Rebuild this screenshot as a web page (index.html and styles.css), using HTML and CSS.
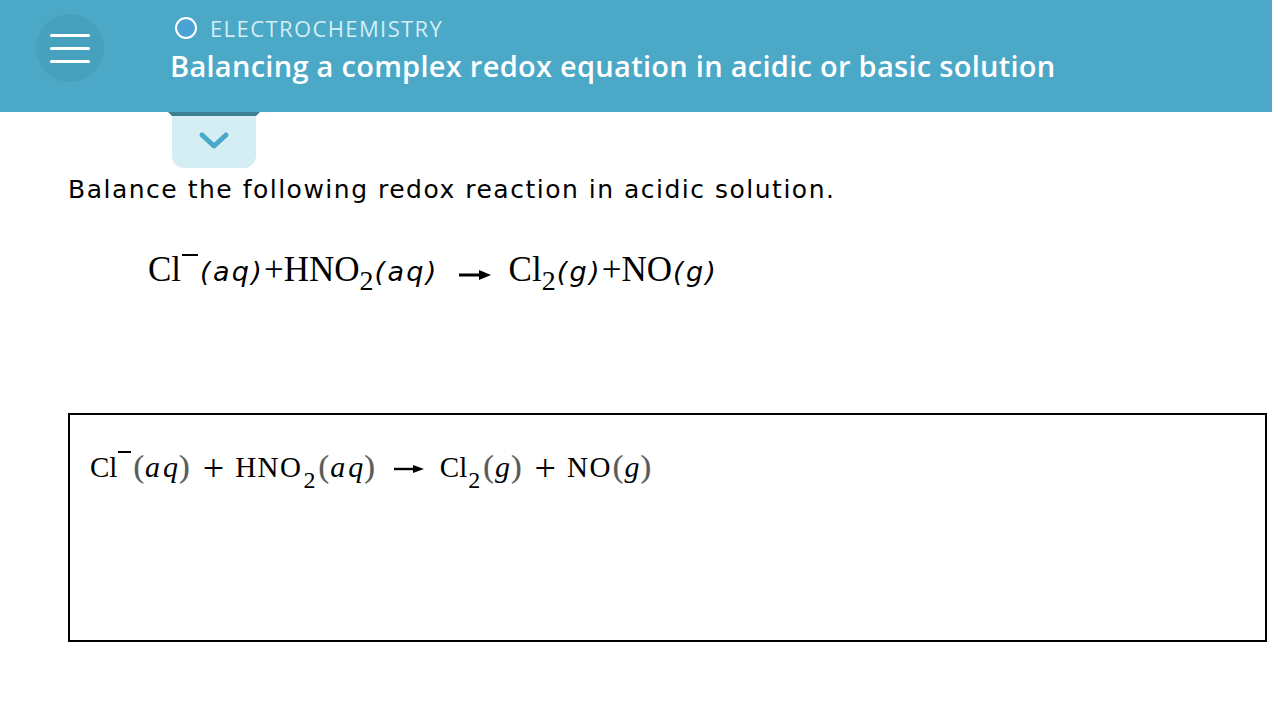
FILE: index.html
```html
<!DOCTYPE html>
<html>
<head>
<meta charset="utf-8">
<link rel="stylesheet" href="styles.css">
</head>
<body>
<header class="topbar">
  <div class="menu-btn">
    <span class="bar"></span><span class="bar"></span><span class="bar"></span>
  </div>
  <div class="titles">
    <div class="topic"><span class="dot"></span>ELECTROCHEMISTRY</div>
    <div class="title">Balancing a complex redox equation in acidic or basic solution</div>
  </div>
</header>
<div class="tab-row">
  <div class="tab">
    <div class="tab-edge"></div>
    <svg class="chev" width="34" height="22" viewBox="0 0 34 22"><path d="M5 5 L17 16 L29 5" fill="none" stroke="#4aa8c8" stroke-width="5" stroke-linecap="round" stroke-linejoin="round"/></svg>
  </div>
</div>
<main class="content">
  <p class="prompt">Balance the following redox reaction in acidic solution.</p>
  <div class="equation">
    <span class="s">Cl</span><span class="chg"></span><span class="st">(aq)</span><span class="s">+HNO</span><sub class="ss">2</sub><span class="st">(aq)</span><svg class="arrow" width="32" height="12" viewBox="0 0 32 12"><path d="M0 6 H24" stroke="#000" stroke-width="3"/><path d="M20 1 L32 6 L20 11 Z" fill="#000"/></svg><span class="s">Cl</span><sub class="ss">2</sub><span class="st">(g)</span><span class="s">+NO</span><span class="st">(g)</span>
  </div>
  <div class="answer">
    <div class="ans-eq">
      <span class="el">Cl</span><span class="achg"></span><span class="par">(</span><i class="v">a</i><i class="v q">q</i><span class="par">)</span><span class="op">+</span><span class="el sp">HNO</span><sub class="asub">2</sub><span class="par">(</span><i class="v">a</i><i class="v q">q</i><span class="par">)</span><svg class="aarrow" width="30" height="10" viewBox="0 0 30 10"><path d="M0 5 H22" stroke="#000" stroke-width="2.4"/><path d="M19 1 L30 5 L19 9 Z" fill="#000"/></svg><span class="el">Cl</span><sub class="asub">2</sub><span class="par">(</span><i class="v">g</i><span class="par">)</span><span class="op">+</span><span class="el sp">NO</span><span class="par">(</span><i class="v">g</i><span class="par">)</span>
    </div>
  </div>
</main>
</body>
</html>
```
FILE: styles.css
```css
body {
  margin: 0;
  background: #ffffff;
  font-family: "DejaVu Sans", Verdana, sans-serif;
}
.topbar {
  height: 112px;
  background: #4ba8c6;
  display: flex;
  align-items: flex-start;
}
.menu-btn {
  width: 68px;
  height: 68px;
  border-radius: 50%;
  background: #46a1be;
  margin: 14px 0 0 36px;
  display: flex;
  flex-direction: column;
  align-items: center;
  justify-content: center;
  gap: 10px;
}
.bar {
  display: block;
  width: 40px;
  height: 3px;
  border-radius: 2px;
  background: #ffffff;
}
.titles {
  margin-left: 66px;
  padding-top: 13px;
  font-family: "Open Sans", "Lato", sans-serif;
}
.topic {
  display: flex;
  align-items: center;
  color: #d3eef5;
  font-size: 22px;
  line-height: 30px;
  margin-left: 5px;
  letter-spacing: 1.4px;
}
.dot {
  width: 22px;
  height: 22px;
  border-radius: 50%;
  border: 2.5px solid #ffffff;
  background: #4aa3d6;
  box-sizing: border-box;
  margin-right: 13px;
}
.title {
  color: #ffffff;
  font-size: 29px;
  line-height: 38px;
  margin-top: 4px;
  font-weight: 600;
  letter-spacing: 0.28px;
}
.tab-row {
  padding-left: 172px;
}
.tab {
  width: 84px;
  height: 56px;
  background: #d5eef4;
  border-radius: 0 0 12px 12px;
  position: relative;
  display: flex;
  justify-content: center;
  padding-top: 18px;
  box-sizing: border-box;
}
.tab-edge {
  position: absolute;
  top: 0;
  left: -4px;
  right: -4px;
  height: 0;
  border-top: 4px solid #3d7f93;
  border-left: 4px solid transparent;
  border-right: 4px solid transparent;
}
.chev { display: block; }
.content {
  padding: 0 5px 0 68px;
}
.prompt {
  margin: 6px 0 0 0;
  font-size: 25px;
  letter-spacing: 1.5px;
  line-height: 32px;
  color: #000;
}
.equation {
  margin: 44px 0 0 80px;
  font-size: 35px;
  line-height: 40px;
  color: #000;
  white-space: nowrap;
  display: flex;
  align-items: baseline;
}
.equation .s { font-family: "Liberation Serif", serif; }
.equation .st {
  font-family: "DejaVu Sans", Verdana, sans-serif;
  font-style: italic;
  font-size: 27px;
  letter-spacing: 2.3px;
  margin-left: 1px;
}
.chg {
  display: inline-block;
  width: 16px;
  height: 2px;
  background: #000;
  align-self: flex-start;
  margin: 4px 1px 0 1px;
}
.ss {
  font-family: "Liberation Serif", serif;
  font-size: 28px;
  position: relative;
  top: 9px;
  line-height: 0;
  vertical-align: baseline;
}
.arrow {
  display: block;
  align-self: center;
  margin: 8px 18px 0 20px;
}
.answer {
  margin-top: 121px;
  height: 229px;
  border: 2px solid #000;
  box-sizing: border-box;
}
.ans-eq {
  padding: 30px 0 0 20px;
  font-family: "Liberation Serif", serif;
  font-size: 29px;
  line-height: 38px;
  color: #000;
  white-space: nowrap;
  display: flex;
  align-items: baseline;
}
.el.sp { letter-spacing: 1.5px; }
.par {
  color: #5a5a5a;
  font-size: 32px;
  text-shadow: 0 0 1px #aaa;
  margin: 0 1px;
}
.v { font-style: italic; font-size: 30px; }
.v.q { margin-left: 3px; }
.op {
  margin: 0 11px 0 12px;
  font-size: 38px;
  line-height: 1;
  position: relative;
  top: 4px;
}
.achg {
  display: inline-block;
  width: 13px;
  height: 2px;
  background: #000;
  align-self: flex-start;
  margin: 6px 1px 0 1px;
}
.asub {
  font-size: 24px;
  position: relative;
  top: 11px;
  line-height: 0;
  vertical-align: baseline;
  margin: 0 2px 0 1px;
}
.aarrow {
  display: block;
  align-self: center;
  margin: 6px 16px 0 18px;
}
```
